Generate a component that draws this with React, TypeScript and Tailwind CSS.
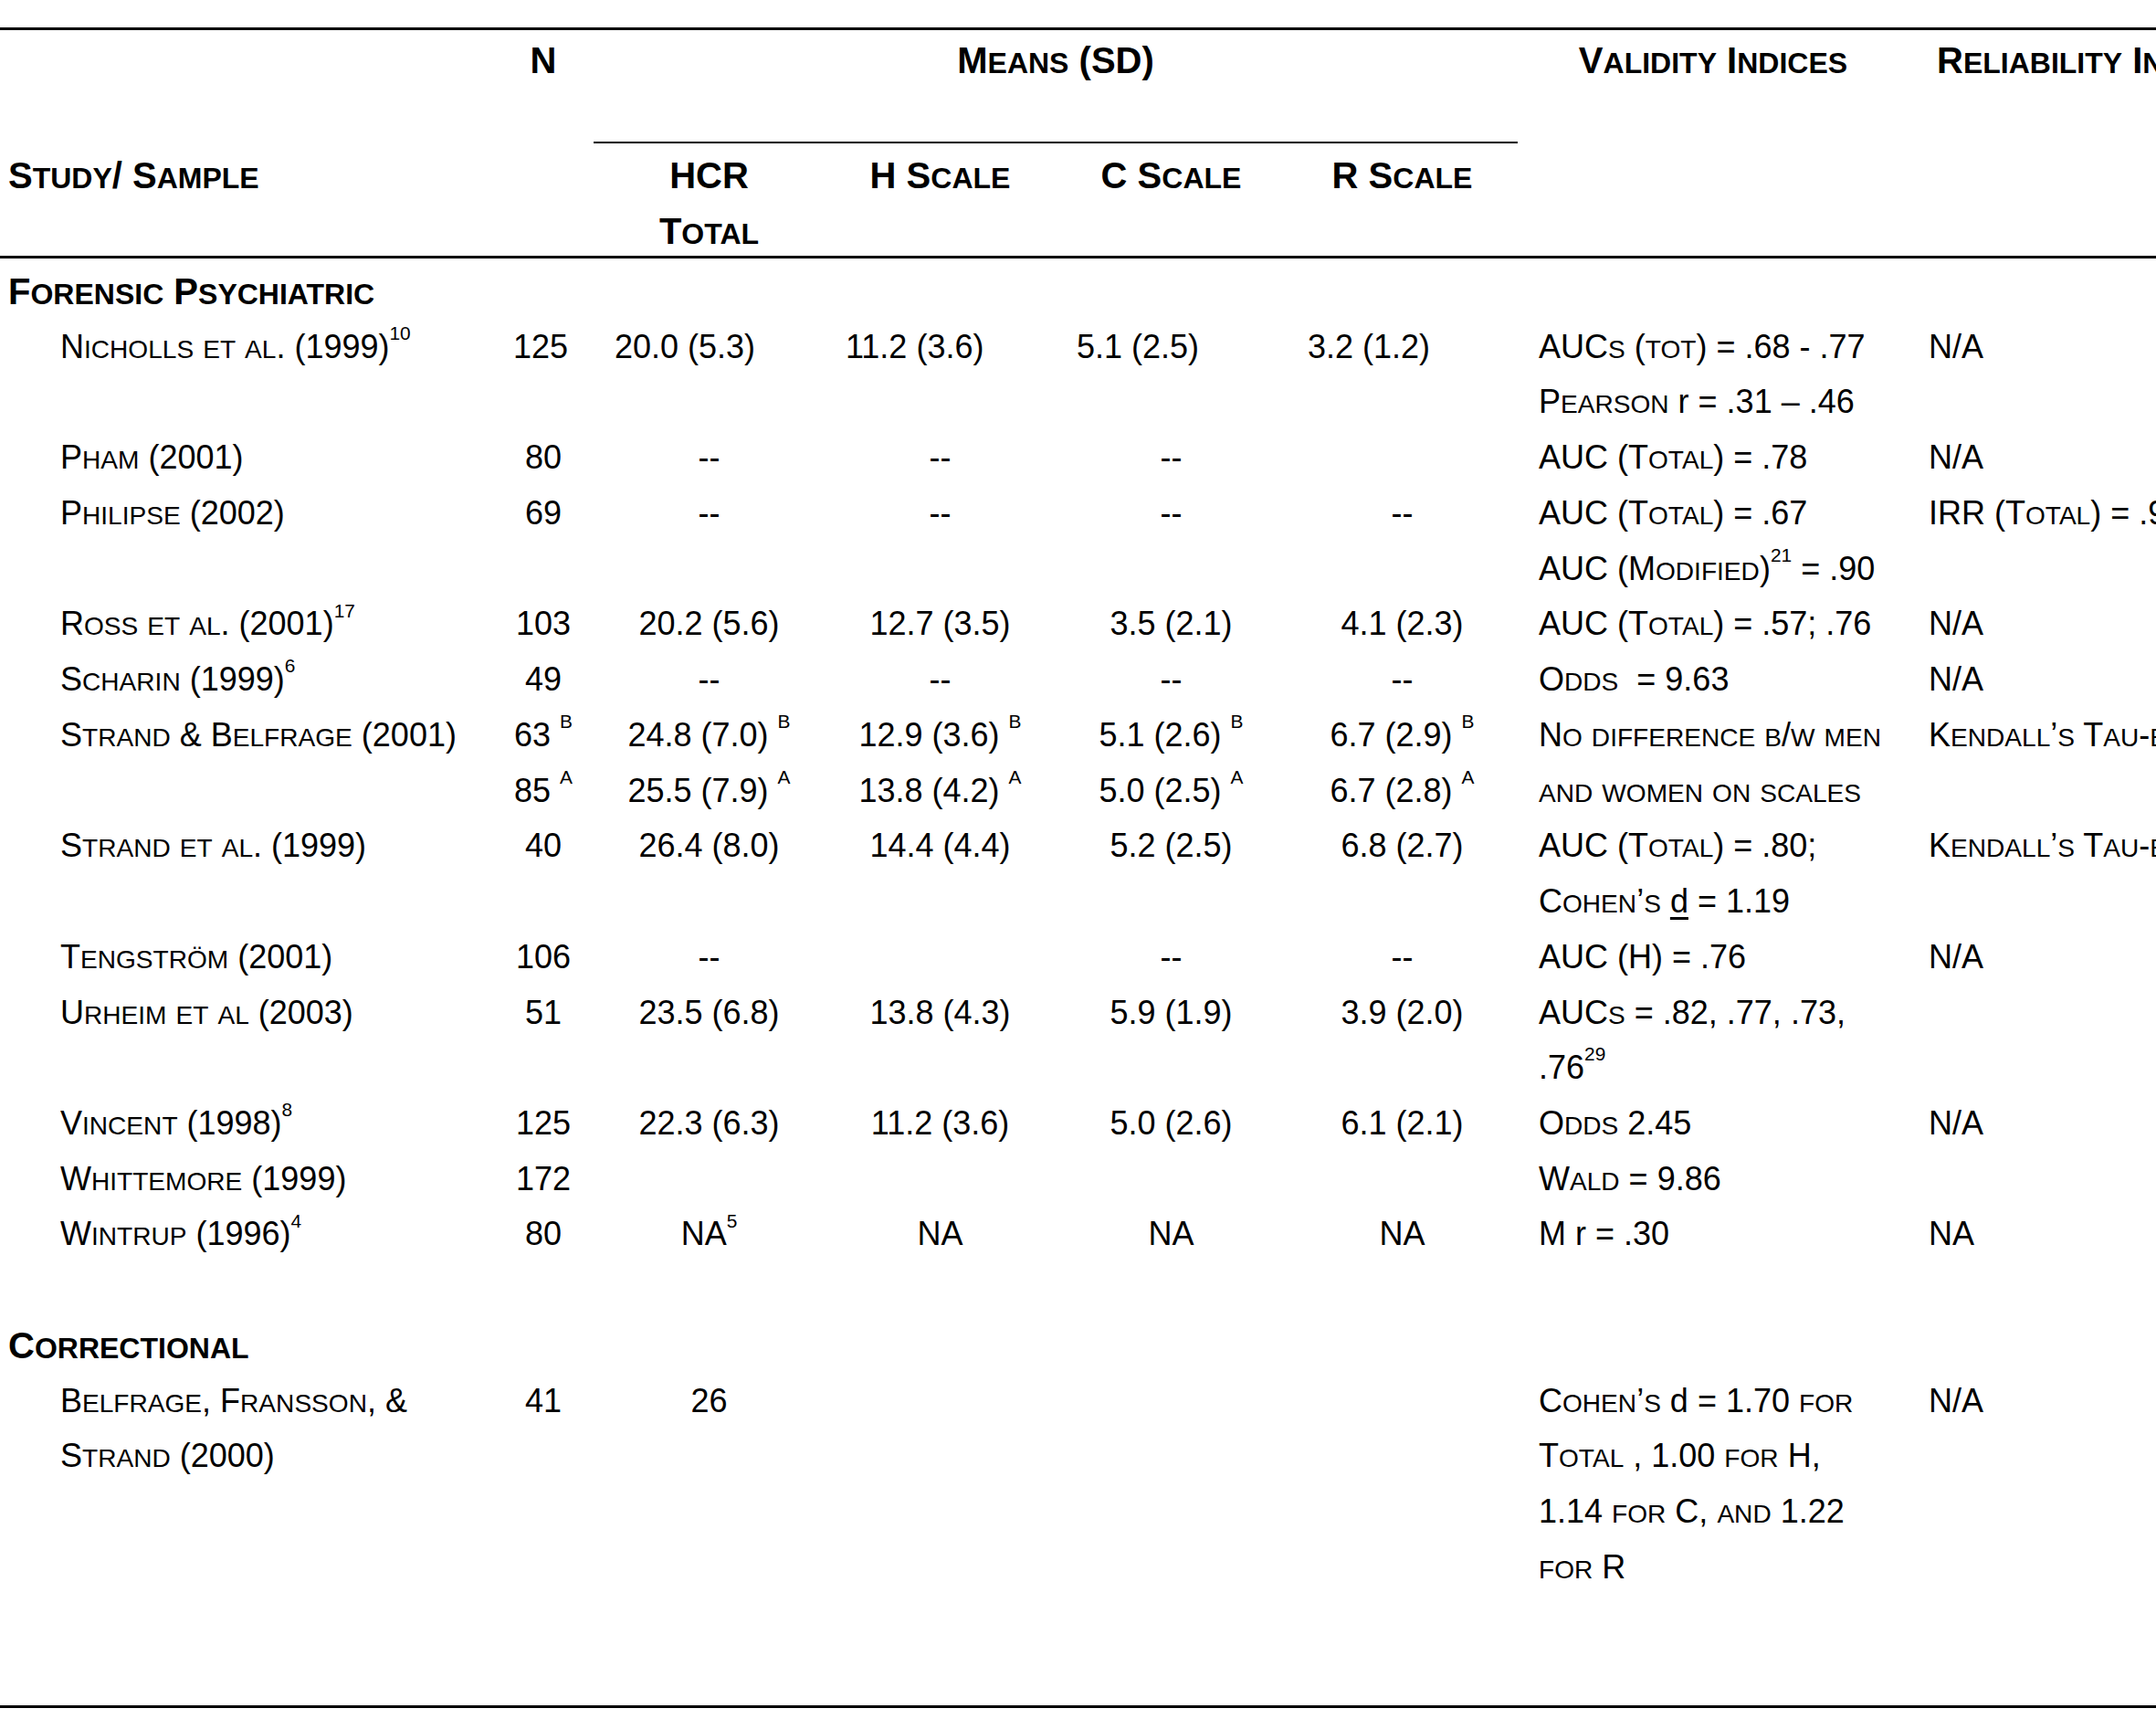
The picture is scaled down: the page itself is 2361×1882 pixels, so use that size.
import type { ReactNode } from 'react';

const cols = 'grid grid-cols-[540px_110px_253px_253px_253px_253px_428px_271px]';

// Word-style small caps: lowercase letters become capitals at a reduced size
function SC({ children, head }: { children: string; head?: boolean }) {
  const parts = children.split(/([a-zà-ÿ]+)/);
  const size = head ? 'text-[0.8em]' : 'text-[0.78em]';
  return (
    <>
      {parts.map((p, i) =>
        /^[a-zà-ÿ]+$/.test(p) ? (
          <span key={i} className={`${size} uppercase leading-none`}>{p}</span>
        ) : (
          p
        ),
      )}
    </>
  );
}

function Sup({ children }: { children: ReactNode }) {
  return <sup className="relative -top-[0.95em] text-[0.58em] leading-none">{children}</sup>;
}

interface RowProps {
  study?: ReactNode;
  n?: ReactNode;
  hcr?: ReactNode;
  h?: ReactNode;
  c?: ReactNode;
  r?: ReactNode;
  val?: ReactNode;
  rel?: ReactNode;
  left?: boolean;
}

function Row({ study, n, hcr, h, c, r, val, rel, left }: RowProps) {
  const num = left ? 'text-left pl-[22px]' : 'text-center';
  const mean = left ? 'text-left pl-[23px]' : 'text-center';
  return (
    <div className={cols}>
      <div className="pl-[66px] whitespace-nowrap">{study}</div>
      <div className={`${num} whitespace-nowrap`}>{n}</div>
      <div className={`${mean} whitespace-nowrap`}>{hcr}</div>
      <div className={`${mean} whitespace-nowrap`}>{h}</div>
      <div className={`${mean} whitespace-nowrap`}>{c}</div>
      <div className={`${mean} whitespace-nowrap`}>{r}</div>
      <div className="pl-[23px] whitespace-nowrap">{val}</div>
      <div className="pl-[22px] whitespace-nowrap">{rel}</div>
    </div>
  );
}

function Section({ title }: { title: string }) {
  return (
    <div className="pl-[9px] text-[40px] font-bold whitespace-nowrap">
      <SC head>{title}</SC>
    </div>
  );
}

export default function App() {
  return (
    <div className="w-[2361px] h-[1882px] overflow-hidden bg-white text-black font-['Liberation_Sans',Arial,sans-serif]">
      <div className="pt-[30px]">
        <div className="h-[3px] bg-black" />

        {/* Header row 1 */}
        <div className={`${cols} h-[122px] pt-[3px] text-[40px] font-bold leading-[60.7px]`}>
          <div />
          <div className="text-center">N</div>
          <div className="col-span-4 text-center whitespace-nowrap">
            <SC head>Means (SD)</SC>
          </div>
          <div className="text-center whitespace-nowrap">
            <SC head>Validity Indices</SC>
          </div>
          <div className="pl-[31px] whitespace-nowrap">
            <SC head>Reliability Indices</SC>
          </div>
        </div>

        {/* Means underline */}
        <div className={cols}>
          <div className="col-start-3 col-span-4 h-[2px] bg-black" />
        </div>

        {/* Header row 2 */}
        <div className={`${cols} h-[123px] pt-[5px] text-[40px] font-bold leading-[61px]`}>
          <div className="pl-[9px] whitespace-nowrap">
            <SC head>Study/ Sample</SC>
          </div>
          <div />
          <div className="text-center">
            <div>HCR</div>
            <div>
              <SC head>Total</SC>
            </div>
          </div>
          <div className="text-center whitespace-nowrap">
            <SC head>H Scale</SC>
          </div>
          <div className="text-center whitespace-nowrap">
            <SC head>C Scale</SC>
          </div>
          <div className="text-center whitespace-nowrap">
            <SC head>R Scale</SC>
          </div>
          <div />
          <div />
        </div>

        <div className="h-[3px] bg-black" />

        {/* Body */}
        <div className="pt-[6px] text-[36px] leading-[60.74px]">
          <Section title="Forensic Psychiatric" />
          <Row
            left
            study={<><SC>Nicholls et al. (1999)</SC><Sup>10</Sup></>}
            n="125"
            hcr="20.0 (5.3)"
            h="11.2 (3.6)"
            c="5.1 (2.5)"
            r="3.2 (1.2)"
            val={
              <>
                <div><SC>AUCs (tot) = .68 - .77</SC></div>
                <div><SC>Pearson</SC> r = .31 – .46</div>
              </>
            }
            rel="N/A"
          />
          <Row
            study={<SC>Pham (2001)</SC>}
            n="80"
            hcr="--"
            h="--"
            c="--"
            val={<SC>AUC (Total) = .78</SC>}
            rel="N/A"
          />
          <Row
            study={<SC>Philipse (2002)</SC>}
            n="69"
            hcr="--"
            h="--"
            c="--"
            r="--"
            val={
              <>
                <div><SC>AUC (Total) = .67</SC></div>
                <div><SC>AUC (Modified)</SC><Sup>21</Sup> = .90</div>
              </>
            }
            rel={<SC>IRR (Total) = .90</SC>}
          />
          <Row
            study={<><SC>Ross et al. (2001)</SC><Sup>17</Sup></>}
            n="103"
            hcr="20.2 (5.6)"
            h="12.7 (3.5)"
            c="3.5 (2.1)"
            r="4.1 (2.3)"
            val={<SC>AUC (Total) = .57; .76</SC>}
            rel="N/A"
          />
          <Row
            study={<><SC>Scharin (1999)</SC><Sup>6</Sup></>}
            n="49"
            hcr="--"
            h="--"
            c="--"
            r="--"
            val={<SC>{'Odds\u00a0 = 9.63'}</SC>}
            rel="N/A"
          />
          <Row
            study={<SC>Strand & Belfrage (2001)</SC>}
            n={
              <>
                <div>63 <Sup>B</Sup></div>
                <div>85 <Sup>A</Sup></div>
              </>
            }
            hcr={
              <>
                <div>24.8 (7.0) <Sup>B</Sup></div>
                <div>25.5 (7.9) <Sup>A</Sup></div>
              </>
            }
            h={
              <>
                <div>12.9 (3.6) <Sup>B</Sup></div>
                <div>13.8 (4.2) <Sup>A</Sup></div>
              </>
            }
            c={
              <>
                <div>5.1 (2.6) <Sup>B</Sup></div>
                <div>5.0 (2.5) <Sup>A</Sup></div>
              </>
            }
            r={
              <>
                <div>6.7 (2.9) <Sup>B</Sup></div>
                <div>6.7 (2.8) <Sup>A</Sup></div>
              </>
            }
            val={
              <>
                <div><SC>No difference b/w men</SC></div>
                <div><SC>and women on scales</SC></div>
              </>
            }
            rel={<SC>Kendall’s Tau-b</SC>}
          />
          <Row
            study={<SC>Strand et al. (1999)</SC>}
            n="40"
            hcr="26.4 (8.0)"
            h="14.4 (4.4)"
            c="5.2 (2.5)"
            r="6.8 (2.7)"
            val={
              <>
                <div><SC>AUC (Total) = .80;</SC></div>
                <div>
                  <SC>Cohen’s</SC> <span className="underline underline-offset-[5px]">d</span> = 1.19
                </div>
              </>
            }
            rel={<SC>Kendall’s Tau-b</SC>}
          />
          <Row
            study={<SC>Tengström (2001)</SC>}
            n="106"
            hcr="--"
            c="--"
            r="--"
            val={<SC>AUC (H) = .76</SC>}
            rel="N/A"
          />
          <Row
            study={<SC>Urheim et al (2003)</SC>}
            n="51"
            hcr="23.5 (6.8)"
            h="13.8 (4.3)"
            c="5.9 (1.9)"
            r="3.9 (2.0)"
            val={
              <>
                <div><SC>AUCs = .82, .77, .73,</SC></div>
                <div>.76<Sup>29</Sup></div>
              </>
            }
          />
          <Row
            study={<><SC>Vincent (1998)</SC><Sup>8</Sup></>}
            n="125"
            hcr="22.3 (6.3)"
            h="11.2 (3.6)"
            c="5.0 (2.6)"
            r="6.1 (2.1)"
            val={<SC>Odds 2.45</SC>}
            rel="N/A"
          />
          <Row study={<SC>Whittemore (1999)</SC>} n="172" val={<SC>Wald = 9.86</SC>} />
          <Row
            study={<><SC>Wintrup (1996)</SC><Sup>4</Sup></>}
            n="80"
            hcr={<>NA<Sup>5</Sup></>}
            h="NA"
            c="NA"
            r="NA"
            val="M r = .30"
            rel="NA"
          />
          <div className="h-[60.74px]" />
          <Section title="Correctional" />
          <Row
            study={
              <>
                <div><SC>Belfrage, Fransson, &</SC></div>
                <div><SC>Strand (2000)</SC></div>
              </>
            }
            n="41"
            hcr="26"
            val={
              <>
                <div><SC>Cohen’s</SC> d = 1.70 <SC>for</SC></div>
                <div><SC>Total , 1.00 for H,</SC></div>
                <div><SC>1.14 for C, and 1.22</SC></div>
                <div><SC>for R</SC></div>
              </>
            }
            rel="N/A"
          />
          <div className="h-[120.5px]" />
        </div>

        <div className="h-[3px] bg-black" />
      </div>
    </div>
  );
}
